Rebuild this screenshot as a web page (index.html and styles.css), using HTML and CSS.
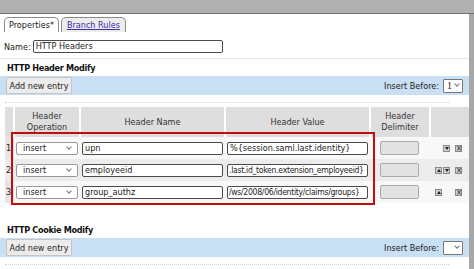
FILE: index.html
```
<!DOCTYPE html>
<html lang="en">
<head>
    <meta charset="UTF-8">
    <title>HTTP Headers</title>
    <link rel="stylesheet" href="styles.css">
</head>
<body>
    <div class="top-bar"></div>

    <div class="page">
        <div class="tabs">
            <div class="tab tab-active">Properties*</div>
            <div class="tab"><a href="#">Branch Rules</a></div>
        </div>

        <div class="name-row">
            <label>Name:</label>
            <div class="text-box name-box">HTTP Headers</div>
        </div>

        <div class="rule"></div>

        <h4 class="section-title">HTTP Header Modify</h4>
        <div class="action-band">
            <button class="btn">Add new entry</button>
            <div class="insert-before">
                Insert Before:
                <span class="mini-select">1<span class="chev"></span></span>
            </div>
        </div>
        <div class="dots"></div>

        <div class="table-wrap">
            <table class="entries">
                <thead>
                    <tr>
                        <th class="col-num"></th>
                        <th class="col-op">Header<br>Operation</th>
                        <th class="col-name">Header Name</th>
                        <th class="col-value">Header Value</th>
                        <th class="col-delim">Header<br>Delimiter</th>
                        <th class="col-act"></th>
                    </tr>
                </thead>
                <tbody>
                    <tr>
                        <td class="num">1</td>
                        <td><span class="select">insert<span class="chev"></span></span></td>
                        <td><div class="text-box">upn</div></td>
                        <td><div class="text-box">%{session.saml.last.identity}</div></td>
                        <td><div class="delim-box"></div></td>
                        <td class="acts"><span class="ico"></span><span class="ico ico-down"></span><span class="ico ico-x">&times;</span></td>
                    </tr>
                    <tr class="alt">
                        <td class="num">2</td>
                        <td><span class="select">insert<span class="chev"></span></span></td>
                        <td><div class="text-box">employeeid</div></td>
                        <td><div class="text-box scrolled">.last.id_token.extension_employeeid}</div></td>
                        <td><div class="delim-box"></div></td>
                        <td class="acts"><span class="ico ico-up"></span><span class="ico ico-down"></span><span class="ico ico-x">&times;</span></td>
                    </tr>
                    <tr>
                        <td class="num">3</td>
                        <td><span class="select">insert<span class="chev"></span></span></td>
                        <td><div class="text-box">group_authz</div></td>
                        <td><div class="text-box scrolled">/ws/2008/06/identity/claims/groups}</div></td>
                        <td><div class="delim-box"></div></td>
                        <td class="acts"><span class="ico ico-up"></span><span class="ico"></span><span class="ico ico-x">&times;</span></td>
                    </tr>
                </tbody>
            </table>
            <div class="highlight"></div>
        </div>

        <h4 class="section-title cookie-title">HTTP Cookie Modify</h4>
        <div class="action-band">
            <button class="btn">Add new entry</button>
            <div class="insert-before">
                Insert Before:
                <span class="mini-select"><span class="chev"></span></span>
            </div>
        </div>
        <div class="dots"></div>
    </div>
</body>
</html>
```

FILE: styles.css
```
* {
    margin: 0;
    padding: 0;
    box-sizing: border-box;
}

body {
    width: 474px;
    height: 269px;
    overflow: hidden;
    background: #fff;
    font-family: "DejaVu Sans Condensed", "DejaVu Sans", sans-serif;
    font-size: 9px;
    color: #222;
}

.top-bar {
    height: 14px;
    background-color: #b0b0b0;
    border-bottom: 1px solid #707070;
}

.page {
    width: 474px;
    height: 255px;
    border-right: 5px solid #a8a8a8;
}

.tabs {
    display: flex;
    gap: 2px;
    padding: 3px 0 0 4px;
    height: 18px;
}

.tab {
    height: 15px;
    padding: 0 5px;
    line-height: 14px;
    border: 1px solid #8a8a8a;
    border-bottom: none;
    border-radius: 5px 5px 0 0;
    background-color: #ececec;
}

.tab-active {
    background-color: #fff;
    padding: 0 4px;
}

.tab a {
    color: #3a2fa8;
    text-decoration: underline;
}

.name-row {
    display: flex;
    align-items: center;
    gap: 2px;
    padding: 8px 0 0 4px;
}

.text-box {
    height: 13px;
    line-height: 11px;
    padding: 0 2px;
    border: 1px solid #4a4a4a;
    border-radius: 2px;
    background: #fff;
    white-space: nowrap;
    overflow: hidden;
}

.text-box.scrolled {
    padding: 0 1px;
    font-size: 8.6px;
    letter-spacing: -0.3px;
}

.name-box {
    width: 190px;
}

.rule {
    margin-top: 5px;
    height: 1px;
    background: #e6e6e6;
}

.section-title {
    font-size: 9px;
    font-weight: bold;
    line-height: 12px;
    letter-spacing: -0.3px;
    margin: 3px 0 0 7px;
    color: #111;
}

.action-band {
    display: flex;
    align-items: center;
    justify-content: space-between;
    height: 19px;
    margin-top: 2px;
    padding: 0 6px 0 6px;
    background-color: #c9dff3;
}

.btn {
    height: 17px;
    width: 66px;
    font-family: inherit;
    font-size: 9px;
    color: #222;
    background: #ececec;
    border: 1px solid #c4c4c4;
    border-radius: 1px;
}

.insert-before {
    display: flex;
    align-items: center;
    gap: 4px;
}

.mini-select {
    position: relative;
    width: 20px;
    height: 14px;
    padding-left: 3px;
    line-height: 12px;
    font-family: "Liberation Serif", serif;
    font-size: 10px;
    background: #fff;
    border: 1px solid #777;
    border-radius: 1px;
}

.chev {
    position: absolute;
    right: 3px;
    top: 2px;
    width: 4px;
    height: 4px;
    border-right: 1px solid #777;
    border-bottom: 1px solid #777;
    transform: rotate(45deg);
}

.dots {
    margin: 7px 20px 0 5px;
    border-top: 1px dotted #cfcfcf;
}

.table-wrap {
    position: relative;
    margin: 4px 0 0 5px;
    width: 464px;
}

.entries {
    width: 464px;
    border-collapse: collapse;
    table-layout: fixed;
}

.entries th {
    height: 30px;
    font-weight: normal;
    line-height: 11px;
    color: #333;
    background: #dedede;
    border-right: 2px solid #fff;
}

.entries th:last-child {
    border-right: none;
}

.col-num { width: 9px; }
.col-op { width: 66px; }
.col-name { width: 145px; }
.col-value { width: 145px; }
.col-delim { width: 60px; }

.entries td {
    height: 22px;
    padding: 0 2px;
    background: #f8f8f8;
}

.entries tr.alt td {
    background: #ececec;
}

.entries td.num {
    padding: 0 0 0 1px;
    background: #e4e4e4;
}

.select {
    position: relative;
    display: block;
    width: 62px;
    height: 13px;
    padding-left: 6px;
    line-height: 11px;
    background: #fff;
    border: 1px solid #999;
    border-radius: 2px;
}

.select .chev {
    right: 6px;
    top: 2px;
}

.delim-box {
    width: 39px;
    height: 14px;
    margin-left: 8px;
    background: #e2e2e2;
    border: 1px solid #aaa;
    border-radius: 2px;
}

.acts {
    text-align: right;
    white-space: nowrap;
}

.ico {
    display: inline-block;
    position: relative;
    width: 7px;
    height: 7px;
    margin-left: 1px;
    vertical-align: middle;
    text-align: center;
    font-size: 8px;
    line-height: 6px;
    color: #222;
}

.ico-up,
.ico-down,
.ico-x {
    background: #cfcfcf;
    border: 1px solid #8a8a8a;
}

.ico-up::after,
.ico-down::after {
    content: "";
    position: absolute;
    left: 1px;
    border-left: 2px solid transparent;
    border-right: 2px solid transparent;
}

.ico-up::after {
    top: 1px;
    border-bottom: 3px solid #222;
}

.ico-down::after {
    top: 1px;
    border-top: 3px solid #222;
}

.acts .ico:last-child {
    margin-left: 5px;
    margin-right: 5px;
}

.highlight {
    position: absolute;
    left: 6px;
    top: 25px;
    width: 364px;
    height: 73px;
    border: 2px solid #c00d0d;
}

.cookie-title {
    margin-top: 21px;
}
```
